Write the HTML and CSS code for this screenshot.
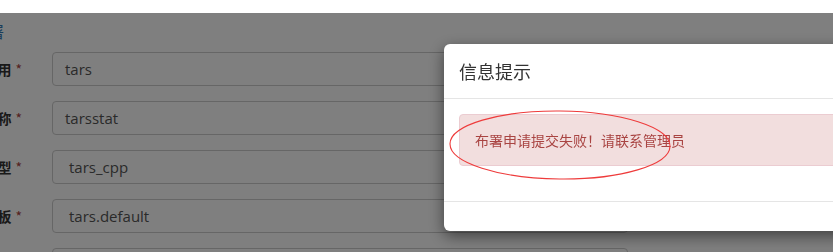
FILE: index.html
```html
<!DOCTYPE html>
<html lang="zh">
<head>
<meta charset="utf-8">
<link rel="stylesheet" href="styles.css">
</head>
<body>
<div class="topbar"></div>
<div class="page">
  <div class="heading"><span>服务部署</span></div>
  <form class="form">
    <div class="row"><div class="label">所属应用 <span class="req">*</span></div><div class="control"><div class="input">tars</div></div></div>
    <div class="row"><div class="label">服务名称 <span class="req">*</span></div><div class="control"><div class="input">tarsstat</div></div></div>
    <div class="row"><div class="label">服务类型 <span class="req">*</span></div><div class="control"><div class="input select">tars_cpp</div></div></div>
    <div class="row"><div class="label">模板 <span class="req">*</span></div><div class="control"><div class="input select">tars.default</div></div></div>
    <div class="row"><div class="label">节点 <span class="req">*</span></div><div class="control"><div class="input"></div></div></div>
  </form>
</div>
<div class="backdrop"></div>
<div class="modal">
  <div class="modal-header"><h4 class="modal-title">信息提示</h4></div>
  <div class="modal-body"><div class="alert">布署申请提交失败！请联系管理员</div></div>
  <div class="modal-footer"></div>
</div>
<svg class="mark" width="226" height="74" viewBox="0 0 226 74"><ellipse cx="113" cy="36" rx="110" ry="34" fill="none" stroke="#ee3b3b" stroke-width="1.1" transform="rotate(0.6 113 36)"/></svg>
</body>
</html>
```
FILE: styles.css
```css
html, body {
  margin: 0;
  padding: 0;
  width: 833px;
  height: 252px;
  overflow: hidden;
  background: #fff;
  font-family: "Open Sans", "Noto Sans CJK SC", sans-serif;
  font-size: 14px;
  color: #333;
}
.topbar {
  height: 13px;
  background: #fff;
}
.page {
  display: flex;
  flex-direction: column;
}
.heading {
  height: 39px;
  display: flex;
  justify-content: flex-end;
  width: 4px;
  font-size: 16px;
  color: #337ab7;
  white-space: nowrap;
  line-height: 39px;
}
.form {
  display: flex;
  flex-direction: column;
  gap: 15px;
  margin: 0;
}
.row {
  display: flex;
  align-items: center;
  gap: 30px;
}
.label {
  width: 22px;
  display: flex;
  justify-content: flex-end;
  white-space: nowrap;
  font-weight: 700;
  color: #333;
  font-family: "Noto Sans CJK SC", sans-serif;
  flex: none;
}
.req {
  color: #a94442;
  margin-left: 4px;
  font-weight: 400;
}
.control {
  width: 576px;
  flex: none;
}
.input {
  box-sizing: border-box;
  height: 34px;
  border: 1px solid #ccc;
  border-radius: 4px;
  padding: 0 12px;
  line-height: 32px;
  color: #555;
  font-size: 15px;
  background: #fff;
}
.input.select {
  padding-left: 16px;
}
.backdrop {
  position: fixed;
  left: 0;
  right: 0;
  top: 13px;
  bottom: 0;
  background: rgba(0, 0, 0, 0.5);
}
.modal {
  position: fixed;
  left: 444px;
  top: 44px;
  width: 600px;
  background: #fff;
  border-radius: 6px;
  box-shadow: 0 5px 15px rgba(0, 0, 0, 0.5);
  font-family: "Noto Sans CJK SC", sans-serif;
}
.modal-header {
  padding: 15px;
  border-bottom: 1px solid #e5e5e5;
  height: 24px;
}
.modal-title {
  margin: 0;
  font-size: 18px;
  font-weight: 400;
  line-height: 25px;
  color: #333;
}
.modal-body {
  padding: 15px;
}
.alert {
  padding: 15px;
  line-height: 20px;
  background: #f2dede;
  border: 1px solid #ebccd1;
  border-radius: 4px;
  color: #a94442;
  margin-bottom: 20px;
  font-size: 14px;
}
.modal-footer {
  border-top: 1px solid #e5e5e5;
  height: 29px;
}
.mark {
  position: fixed;
  left: 447px;
  top: 109px;
}
```
